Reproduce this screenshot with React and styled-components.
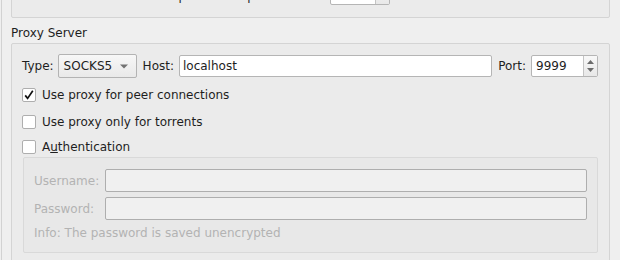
import React from 'react';
import styled, { createGlobalStyle } from 'styled-components';

const GlobalStyle = createGlobalStyle`
  html, body {
    margin: 0;
    padding: 0;
    background: #efefef;
  }
  body {
    font-family: "DejaVu Sans", "Liberation Sans", sans-serif;
    font-size: 12px;
    line-height: 14px;
    color: #1e1e1e;
    overflow: hidden;
  }
`;

const Page = styled.div`
  width: 619px;
  height: 260px;
  overflow: hidden;
  box-sizing: border-box;
  margin-left: 1px;
  border-left: 1px solid #d2d2d2;
  padding: 0 10px 0 9px;
`;

const GroupFrame = styled.div`
  border: 1px solid #d4d4d4;
  border-radius: 2px;
  background: #ebebeb;
  margin-top: ${p => p.$mt || 0}px;
  padding: ${p => p.$pad};
`;

const GroupTitle = styled.div`
  margin: 8px 0 3px 0;
  height: 14px;
`;

const LimitRow = styled.div`
  display: grid;
  grid-template-columns: 302px 60px;
  column-gap: 6px;
  align-items: center;
  height: 23px;
`;

const LimitLabel = styled.span`
  padding-left: 20px;
  white-space: nowrap;
  margin-top: 4px;
`;

const FieldRow = styled.div`
  display: flex;
  align-items: center;
  gap: 5px;
  height: 24px;
`;

const Label = styled.span`
  white-space: nowrap;
  margin-left: ${p => p.$ml || 0}px;
  color: ${p => (p.$disabled ? '#b3b3b3' : 'inherit')};
`;

const Combo = styled.div`
  box-sizing: border-box;
  width: 79px;
  height: 24px;
  border: 1px solid #b3b3b3;
  border-radius: 2px;
  background: linear-gradient(#f7f7f7, #e9e9e9);
  display: flex;
  align-items: center;
  justify-content: space-between;
  padding: 0 8px 0 5px;
  margin-left: -1px;
`;

const TextInput = styled.div`
  box-sizing: border-box;
  flex: 1;
  height: ${p => (p.$tall ? 23 : 22)}px;
  border: 1px solid ${p => (p.$disabled ? '#aeaeae' : '#b5b5b5')};
  border-radius: 2px;
  background: ${p => (p.$disabled ? '#f0f0f0' : '#ffffff')};
  padding: 0 3px;
  display: flex;
  align-items: center;
`;

const Spin = styled.div`
  box-sizing: border-box;
  width: ${p => p.$w}px;
  height: ${p => p.$h}px;
  border: 1px solid #b5b5b5;
  border-radius: 2px;
  background: #ffffff;
  display: flex;
`;

const SpinText = styled.div`
  flex: 1;
  display: flex;
  align-items: center;
  padding-left: 4px;
`;

const SpinButtons = styled.div`
  width: 13px;
  border-left: 1px solid #c4c4c4;
  background: linear-gradient(#f8f8f8, #e8e8e8);
  display: flex;
  flex-direction: column;
  align-items: center;
  justify-content: center;
  gap: 4px;
`;

const CheckRow = styled.div`
  display: flex;
  align-items: center;
  gap: 6px;
  height: 19px;
  margin-top: ${p => p.$mt}px;
`;

const Box = styled.div`
  box-sizing: border-box;
  width: 14px;
  height: 14px;
  border: 1px solid #aeaeae;
  border-radius: 2px;
  background: #ffffff;
  display: flex;
  align-items: center;
  justify-content: center;
`;

const AuthFrame = styled.div`
  margin: 1px 0 0 1px;
  border: 1px solid #d9d9d9;
  border-radius: 2px;
  background: #e8e8e8;
  padding: 11px 10px 12px 10px;
  display: grid;
  grid-template-columns: auto 1fr;
  column-gap: 6px;
  row-gap: 5px;
  align-items: center;
`;

const Info = styled.div`
  grid-column: 1 / -1;
  margin-top: 1px;
  color: #b3b3b3;
`;

const DownArrow = () => (
  <svg width="8" height="5" viewBox="0 0 8 5">
    <path d="M0 0.5 L8 0.5 L4 4.5 Z" fill="#727272" />
  </svg>
);

const SpinArrows = () => (
  <SpinButtons>
    <svg width="7" height="4" viewBox="0 0 7 4">
      <path d="M0 4 L7 4 L3.5 0 Z" fill="#6c6c6c" />
    </svg>
    <svg width="7" height="4" viewBox="0 0 7 4">
      <path d="M0 0 L7 0 L3.5 4 Z" fill="#6c6c6c" />
    </svg>
  </SpinButtons>
);

const Check = () => (
  <svg width="12" height="12" viewBox="0 0 12 12">
    <path d="M2.2 6.4 L4.6 9.4 L9.8 1.8" fill="none" stroke="#111" strokeWidth="1.7" />
  </svg>
);

export default function App() {
  return (
    <Page>
      <GlobalStyle />
      <GroupFrame $mt={-28} $pad="9px 10px 12px 10px">
        <LimitRow>
          <LimitLabel>Maximum number of upload slots per torrent:</LimitLabel>
          <Spin $w={60} $h={23}>
            <SpinText>4</SpinText>
            <SpinArrows />
          </Spin>
        </LimitRow>
      </GroupFrame>

      <GroupTitle>Proxy Server</GroupTitle>
      <GroupFrame $pad="10px 11px 12px 10px">
        <FieldRow>
          <Label>Type:</Label>
          <Combo>
            <span>SOCKS5</span>
            <DownArrow />
          </Combo>
          <Label $ml={1}>Host:</Label>
          <TextInput>localhost</TextInput>
          <Label $ml={1}>Port:</Label>
          <Spin $w={67} $h={22}>
            <SpinText>9999</SpinText>
            <SpinArrows />
          </Spin>
        </FieldRow>

        <CheckRow $mt={7}>
          <Box><Check /></Box>
          <span>Use proxy for peer connections</span>
        </CheckRow>
        <CheckRow $mt={8}>
          <Box />
          <span>Use proxy only for torrents</span>
        </CheckRow>
        <CheckRow $mt={6}>
          <Box />
          <span>A<u>u</u>thentication</span>
        </CheckRow>

        <AuthFrame>
          <Label $disabled>Username:</Label>
          <TextInput $disabled $tall />
          <Label $disabled>Password:</Label>
          <TextInput $disabled $tall />
          <Info>Info: The password is saved unencrypted</Info>
        </AuthFrame>
      </GroupFrame>
    </Page>
  );
}
